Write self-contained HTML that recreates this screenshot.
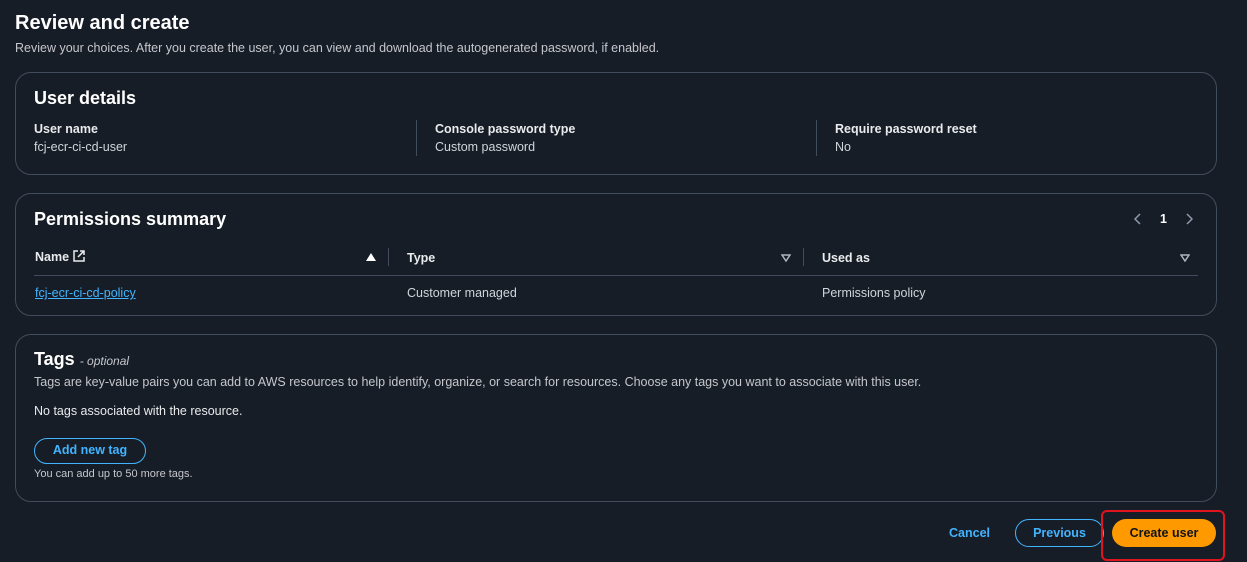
<!DOCTYPE html>
<html><head><style>
body{margin:0;width:1247px;height:562px;background:#161d26;color:#d1d5db;font-family:"Liberation Sans",sans-serif;position:relative;overflow:hidden}
.a{position:absolute;white-space:nowrap}
.card{position:absolute;left:15px;width:1200px;border:1px solid #414d5c;border-radius:16px;background:#161d26}
h1{margin:0;font-size:20px;font-weight:bold;color:#fff}
.h2{font-size:18px;font-weight:bold;color:#fff}
.lb{font-size:12.5px;font-weight:bold;color:#e9ebed}
.v{font-size:12.5px;color:#d1d5db}
.sep{position:absolute;width:1px;background:#414d5c}
.btn{position:absolute;border-radius:14px;font-size:12.5px;font-weight:bold;text-align:center;box-sizing:border-box}
</style></head><body>
<h1 class="a" style="left:15px;top:12px">Review and create</h1>
<div class="a v" style="left:15px;top:41px;color:#c6c6cd">Review your choices. After you create the user, you can view and download the autogenerated password, if enabled.</div>

<div class="card" style="top:72px;height:101px"></div>
<div class="a h2" style="left:34px;top:88px">User details</div>
<div class="a lb" style="left:34px;top:122px">User name</div>
<div class="a v" style="left:34px;top:140px">fcj-ecr-ci-cd-user</div>
<div class="sep" style="left:416px;top:120px;height:36px"></div>
<div class="a lb" style="left:435px;top:122px">Console password type</div>
<div class="a v" style="left:435px;top:140px">Custom password</div>
<div class="sep" style="left:816px;top:120px;height:36px"></div>
<div class="a lb" style="left:835px;top:122px">Require password reset</div>
<div class="a v" style="left:835px;top:140px">No</div>

<div class="card" style="top:193px;height:121px"></div>
<div class="a h2" style="left:34px;top:209px">Permissions summary</div>
<svg class="a" style="left:1133px;top:212px" width="10" height="14" viewBox="0 0 10 14"><path d="M7 2L2 7l5 5" stroke="#8d99a8" stroke-width="1.5" fill="none"/></svg>
<div class="a" style="left:1160px;top:212px;color:#fff;font-size:12.5px;font-weight:bold">1</div>
<svg class="a" style="left:1184px;top:212px" width="10" height="14" viewBox="0 0 10 14"><path d="M3 2l5 5-5 5" stroke="#8d99a8" stroke-width="1.5" fill="none"/></svg>
<div class="a lb" style="left:35px;top:250px">Name <svg width="12" height="12" viewBox="0 0 12 12" style="vertical-align:-1px"><path d="M5 1H1v10h10V7M7 1h4v4M11 1L5 7" stroke="#e9ebed" stroke-width="1.5" fill="none"/></svg></div>
<svg class="a" style="left:366px;top:253px" width="10" height="8" viewBox="0 0 10 8"><path d="M5 0L10 8H0z" fill="#fff"/></svg>
<div class="sep" style="left:388px;top:248px;height:18px"></div>
<div class="a lb" style="left:407px;top:251px">Type</div>
<svg class="a" style="left:781px;top:254px" width="10" height="8" viewBox="0 0 10 8"><path d="M1 1h8L5 7z" stroke="#aab4bf" stroke-width="1.5" fill="none"/></svg>
<div class="sep" style="left:803px;top:248px;height:18px"></div>
<div class="a lb" style="left:822px;top:251px">Used as</div>
<svg class="a" style="left:1180px;top:254px" width="10" height="8" viewBox="0 0 10 8"><path d="M1 1h8L5 7z" stroke="#aab4bf" stroke-width="1.5" fill="none"/></svg>
<div style="position:absolute;left:34px;top:275px;width:1164px;height:1px;background:#414d5c"></div>
<div class="a v" style="left:35px;top:286px;color:#42b4ff;text-decoration:underline">fcj-ecr-ci-cd-policy</div>
<div class="a v" style="left:407px;top:286px">Customer managed</div>
<div class="a v" style="left:822px;top:286px">Permissions policy</div>

<div class="card" style="top:334px;height:166px"></div>
<div class="a h2" style="left:34px;top:349px">Tags <i style="font-size:12px;font-weight:normal;color:#c6c6cd">- optional</i></div>
<div class="a v" style="left:34px;top:375px;color:#c6c6cd">Tags are key-value pairs you can add to AWS resources to help identify, organize, or search for resources. Choose any tags you want to associate with this user.</div>
<div class="a v" style="left:34px;top:404px;color:#e9ebed">No tags associated with the resource.</div>
<div class="btn" style="left:34px;top:438px;width:112px;height:26px;border:1.5px solid #42b4ff;color:#42b4ff;line-height:23px">Add new tag</div>
<div class="a" style="left:34px;top:468px;font-size:11px;color:#c6c6cd">You can add up to 50 more tags.</div>

<div class="a" style="left:949px;top:526px;font-size:12.5px;font-weight:bold;color:#42b4ff">Cancel</div>
<div class="btn" style="left:1015px;top:519px;width:89px;height:28px;border:1px solid #42b4ff;color:#42b4ff;line-height:26px">Previous</div>
<div style="position:absolute;left:1101px;top:510px;width:120px;height:47px;border:2px solid #e0141e;border-radius:6px"></div>
<div class="btn" style="left:1112px;top:519px;width:104px;height:28px;background:#ff9900;color:#0f141a;line-height:28px">Create user</div>
</body></html>
